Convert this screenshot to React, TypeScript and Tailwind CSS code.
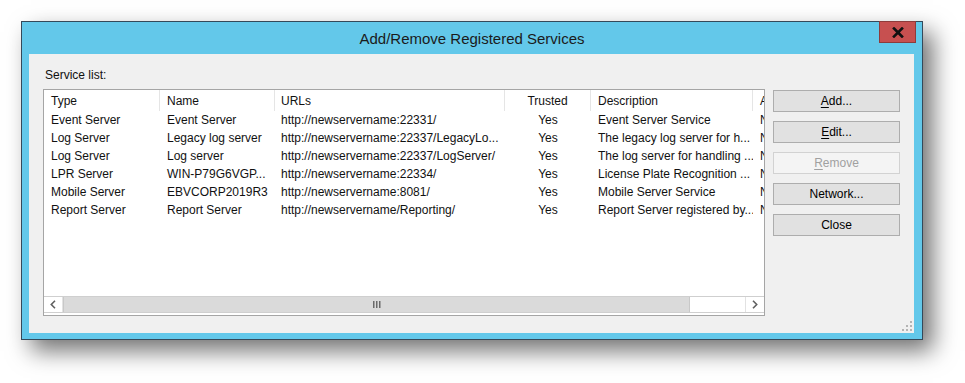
import React from 'react';

const font = { fontFamily: '"Liberation Sans", Arial, sans-serif' };

const rows = [
  ['Event Server', 'Event Server', 'http://newservername:22331/', 'Yes', 'Event Server Service'],
  ['Log Server', 'Legacy log server', 'http://newservername:22337/LegacyLo...', 'Yes', 'The legacy log server for h...'],
  ['Log Server', 'Log server', 'http://newservername:22337/LogServer/', 'Yes', 'The log server for handling ...'],
  ['LPR Server', 'WIN-P79G6VGP...', 'http://newservername:22334/', 'Yes', 'License Plate Recognition ...'],
  ['Mobile Server', 'EBVCORP2019R3', 'http://newservername:8081/', 'Yes', 'Mobile Server Service'],
  ['Report Server', 'Report Server', 'http://newservername/Reporting/', 'Yes', 'Report Server registered by...'],
];

const cols = 'grid grid-cols-[116px_115px_230px_86px_162px_11px]';

function Chevron({ dir }: { dir: 'left' | 'right' }) {
  return (
    <svg width="6" height="9" viewBox="0 0 6 9" fill="none" stroke="#606060" strokeWidth="1.6">
      {dir === 'left' ? <path d="M5 0.8L1.3 4.5L5 8.2" /> : <path d="M1 0.8L4.7 4.5L1 8.2" />}
    </svg>
  );
}

function Grip() {
  const dots = [
    [8, 0],
    [4, 4],
    [8, 4],
    [0, 8],
    [4, 8],
    [8, 8],
  ];
  return (
    <svg width="10" height="10" viewBox="0 0 10 10">
      {dots.map(([x, y], i) => (
        <rect key={i} x={x} y={y} width="2" height="2" fill="#b4b4b4" />
      ))}
    </svg>
  );
}

function Button({ label, mnemonic, disabled }: { label: string; mnemonic?: number; disabled?: boolean }) {
  const text =
    mnemonic === undefined ? (
      label
    ) : (
      <span>
        {label.slice(0, mnemonic)}
        <u className="underline-offset-2">{label[mnemonic]}</u>
        {label.slice(mnemonic + 1)}
      </span>
    );
  return (
    <div
      className={
        disabled
          ? 'h-[22px] flex items-center justify-center border border-[#d2d2d2] bg-[#f4f4f4] text-[12px] text-[#a0a0a0]'
          : 'h-[22px] flex items-center justify-center border border-[#adadad] bg-[#e1e1e1] text-[12px] text-black'
      }
    >
      {text}
    </div>
  );
}

export default function App() {
  return (
    <div className="w-[965px] h-[383px] bg-white pt-[21px] pl-[21px]" style={font}>
      <div className="w-[902px] h-[319px] border border-[#34495a] bg-[#63c8ea] flex flex-col shadow-[10px_11px_22px_rgba(0,0,0,0.55)]">
        {/* Title bar */}
        <div className="grid grid-cols-[1fr_auto_1fr] h-[32px] shrink-0">
          <div />
          <div className="text-[15px] leading-[33px] text-[#1b1b1b]">Add/Remove Registered Services</div>
          <div className="flex justify-end pr-[6px]">
            <div className="w-[37px] h-[22px] -mt-px bg-[#c75050] border border-[#8e3b3b] flex items-center justify-center">
              <svg width="12" height="11" viewBox="0 0 12 11" stroke="#111" strokeWidth="2.6" strokeLinecap="square">
                <path d="M2 1.5L10 9.5M10 1.5L2 9.5" />
              </svg>
            </div>
          </div>
        </div>

        {/* Client area */}
        <div className="flex-1 ml-[7px] mr-[8px] mb-[6px] bg-[#f0f0f0] flex flex-col px-[14px] pt-[13px]">
          <div className="text-[12px] leading-[16px] pl-[2px] mb-[6px] text-[#111]">Service list:</div>
          <div className="flex gap-[8px]">
            {/* List view */}
            <div className="w-[722px] h-[227px] border border-[#a5a5a5] bg-white flex flex-col text-[12px] text-[#111]">
              <div className={`${cols} h-[21px] items-center`}>
                <div className="pl-[7px] pt-px border-r border-[#e5e5e5] h-full flex items-center">Type</div>
                <div className="pl-[7px] pt-px border-r border-[#e5e5e5] h-full flex items-center">Name</div>
                <div className="pl-[6px] pt-px border-r border-[#e5e5e5] h-full flex items-center">URLs</div>
                <div className="pt-px border-r border-[#e5e5e5] h-full flex items-center justify-center">Trusted</div>
                <div className="pl-[7px] pt-px border-r border-[#e5e5e5] h-full flex items-center">Description</div>
                <div className="pl-[7px] pt-px overflow-hidden whitespace-nowrap h-full flex items-center">Address</div>
              </div>
              {rows.map((r, i) => (
                <div key={i} className={`${cols} h-[18px] items-center whitespace-nowrap`}>
                  <div className="pl-[7px] overflow-hidden">{r[0]}</div>
                  <div className="pl-[7px] overflow-hidden">{r[1]}</div>
                  <div className="pl-[6px] overflow-hidden">{r[2]}</div>
                  <div className="text-center overflow-hidden">{r[3]}</div>
                  <div className="pl-[7px] overflow-hidden">{r[4]}</div>
                  <div className="pl-[7px] overflow-hidden">No</div>
                </div>
              ))}
              <div className="flex-1" />
              {/* Horizontal scrollbar */}
              <div className="h-[17px] flex border-y border-[#cfcfcf] bg-white shrink-0">
                <div className="w-[19px] flex items-center justify-center border-r border-[#e2e2e2]">
                  <Chevron dir="left" />
                </div>
                <div className="w-[627px] bg-[#dadada] border-x border-[#c8c8c8] flex items-center justify-center">
                  <svg width="8" height="7" viewBox="0 0 8 7" fill="#6a6a6a">
                    <rect x="0" y="0" width="1.5" height="7" />
                    <rect x="3" y="0" width="1.5" height="7" />
                    <rect x="6" y="0" width="1.5" height="7" />
                  </svg>
                </div>
                <div className="flex-1" />
                <div className="w-[19px] flex items-center justify-center border-l border-[#e2e2e2]">
                  <Chevron dir="right" />
                </div>
              </div>
              <div className="h-[2px] shrink-0" />
            </div>

            {/* Buttons */}
            <div className="w-[127px] flex flex-col gap-[9px] pt-px">
              <Button label="Add..." mnemonic={0} />
              <Button label="Edit..." mnemonic={0} />
              <Button label="Remove" mnemonic={0} disabled />
              <Button label="Network..." />
              <Button label="Close" />
            </div>
          </div>
          <div className="flex-1 flex items-end justify-end -mr-[12px] pb-[2px]">
            <Grip />
          </div>
        </div>
      </div>
    </div>
  );
}
